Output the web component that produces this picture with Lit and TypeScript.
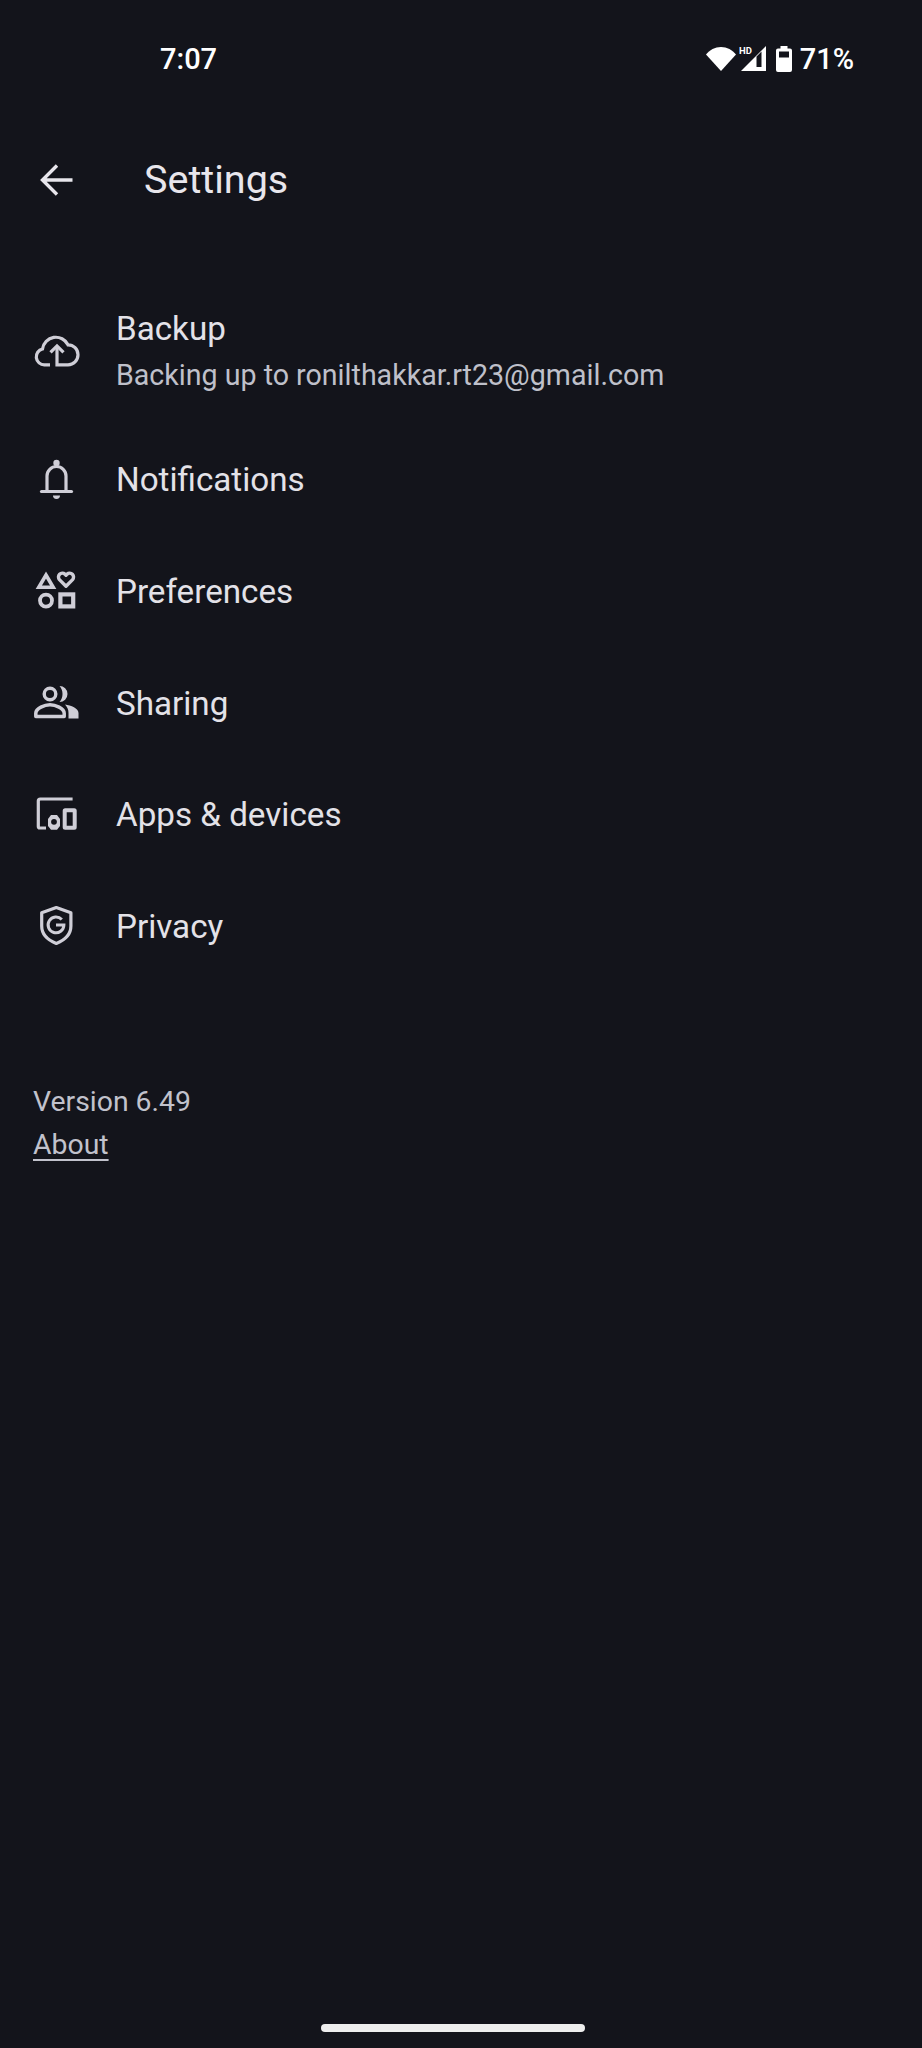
import { LitElement, html, css, svg } from "lit";
import { customElement } from "lit/decorators.js";

const BG = "#13141b";

const ICONS: Record<string, unknown> = {
  backup: svg`<g fill="none" stroke="currentColor" stroke-width="3.200"><path d="M18 36.800H12.500A8 8 0 0 1 10.500 21A13.500 13.500 0 0 1 36 16.800A10 10 0 0 1 36 36.800H25V18.600"/><path d="M18.500 24.400 25 17.900 31.500 24.400"/></g>`,
  bell: svg`<path d="M9.500 36.500H39.500" fill="none" stroke="currentColor" stroke-width="3.200" stroke-linecap="round"/><path d="M15 36V21a9.500 9.500 0 0 1 19 0V36" fill="none" stroke="currentColor" stroke-width="3.200"/><circle cx="24.500" cy="8" r="3.200" fill="currentColor"/><path d="M21 40.500h7a3.500 3.500 0 0 1-7 0z" fill="currentColor"/>`,
  prefs: svg`<path d="M14 8 21.200 20.300H6.800z" fill="none" stroke="currentColor" stroke-width="3.600" stroke-linejoin="miter"/><path d="M34 19.200 27.400 12.600a3.900 3.900 0 0 1 5.500-5.500L34 8.200l1.100-1.100a3.900 3.900 0 0 1 5.500 5.500z" fill="none" stroke="currentColor" stroke-width="3.400" stroke-linejoin="round"/><circle cx="14" cy="33.600" r="6" fill="none" stroke="currentColor" stroke-width="3.800"/><rect x="28.400" y="27.400" width="12.800" height="12" fill="none" stroke="currentColor" stroke-width="4.200"/>`,
  people: svg`<circle cx="18" cy="16" r="5.800" fill="none" stroke="currentColor" stroke-width="3.400"/><path d="M3.800 38.600V35.200c0-5 9-8.500 14.200-8.500s14.200 3.500 14.200 8.500v3.400z" fill="none" stroke="currentColor" stroke-width="3.500" stroke-linejoin="round"/><path d="M27.500 8a8 8 0 0 1 0 16c2-2.200 3-5 3-8s-1-5.800-3-8z" fill="currentColor"/><path d="M33 26.500c6 1 13.500 3.500 13.500 8.500v5.400H36.500V35c0-3.500-1.200-6-3.500-8.500z" fill="currentColor"/>`,
  devices: svg`<path d="M40.600 9H8.300a2 2 0 0 0-2 2V36.500a1.500 1.500 0 0 0 1.500 1.500H14" fill="none" stroke="currentColor" stroke-width="3.200"/><path d="M19 25h6l3 4v7l-3 3.700h-6l-3-3.700v-7z" fill="currentColor"/><circle cx="22" cy="31.800" r="2.900" fill="${BG}"/><rect x="32.700" y="20.300" width="10" height="17.500" rx=".5" fill="none" stroke="currentColor" stroke-width="4"/>`,
  shield: svg`<path d="M24.300 5.500 38.900 10.800V24c0 8-6 14-14.600 17.400C15.700 38 9.700 32 9.700 24V10.800z" fill="none" stroke="currentColor" stroke-width="3.200" stroke-linejoin="round"/><path d="M29.800 17.500A7.900 7.900 0 1 0 31.900 23H24" fill="none" stroke="currentColor" stroke-width="3"/>`,
};

const ROWS = [
  { icon: "bell", label: "Notifications" },
  { icon: "prefs", label: "Preferences" },
  { icon: "people", label: "Sharing" },
  { icon: "devices", label: "Apps & devices" },
  { icon: "shield", label: "Privacy" },
];

@customElement("app-root")
export class AppRoot extends LitElement {
  static styles = css`
    :host {
      display: block;
      width: 922px;
      height: 2048px;
      background: #13141b;
      font-family: Roboto, "Noto Sans", sans-serif;
      color: #e6e3e9;
      overflow: hidden;
      position: relative;
    }
    .status {
      height: 58px;
      padding: 30px 68px 0 160px;
      display: flex;
      align-items: center;
      justify-content: space-between;
      color: #fff;
      font-weight: 500;
      font-size: 29px;
    }
    .sysicons { display: flex; align-items: center; }
    .wifi { display: block; }
    .signal { display: block; margin-left: 3px; }
    .battery { display: block; margin-left: 9px; }
    .pct { margin-left: 8px; }
    .appbar {
      display: flex;
      align-items: center;
      height: 60px;
      margin-top: 62px;
      padding-left: 38px;
      gap: 70px;
    }
    .appbar svg { display: block; }
    .title { font-size: 39.5px; font-weight: 400; color: #e8e6ec; line-height: 60px; }
    .list { margin-top: 71px; }
    .row {
      display: flex;
      align-items: center;
      height: 111.700px;
      padding-left: 32px;
    }
    .row.two { height: 142px; }
    .icon { width: 48px; height: 48px; color: #cfced7; flex: none; display: block; }
    .label { font-size: 33.200px; color: #e3e2e8; line-height: 46px; }
    .sub { font-size: 28.600px; color: #bfc0ca; line-height: 46px; }
    .textcol { display: flex; flex-direction: column; margin-left: 36px; }
    .textcol.one { padding-top: 3px; }
    .foot { padding-left: 33px; margin-top: 99px; font-size: 28.400px; color: #c1c2cc; line-height: 43px; }
    .about {
      display: block;
      text-decoration: underline;
      text-decoration-thickness: 2px;
      text-underline-offset: 5px;
    }
    .nav {
      position: absolute;
      left: 321px;
      top: 2024px;
      width: 264px;
      height: 8px;
      border-radius: 4px;
      background: #eeeeee;
    }
  `;

  render() {
    return html`
      <div class="status">
        <span>7:07</span>
        <span class="sysicons">
          <svg class="wifi" width="30" height="24" viewBox="0 0 30 24"><path d="M0 7.500C3.500 3 9 0 15 0s11.500 3 15 7.500L15 24z" fill="#fff"/></svg>
          <svg class="signal" width="28" height="26" viewBox="0 0 28 26"><path d="M2 25 27 0v25z M17.500 10.500V21H22.500V5.500z" fill="#fff" fill-rule="evenodd"/><text x="0" y="7.500" font-size="9.500" font-weight="700" fill="#fff" font-family="Roboto">HD</text></svg>
          <svg class="battery" width="16" height="26" viewBox="0 0 16 26"><path d="M4.500 0h7v2.500h2.500a2 2 0 0 1 2 2V24a2 2 0 0 1-2 2H2a2 2 0 0 1-2-2V4.500a2 2 0 0 1 2-2h2.500z" fill="#fff"/><rect x="3" y="5.500" width="10" height="6" fill="${BG}"/></svg>
          <span class="pct">71%</span>
        </span>
      </div>
      <div class="appbar">
        <svg width="36" height="36" viewBox="0 0 36 36"><path d="M34.500 18H5M19 3.500 4.500 18 19 32.500" fill="none" stroke="#e8e6ec" stroke-width="3.400"/></svg>
        <span class="title">Settings</span>
      </div>
      <div class="list">
        <div class="row two">
          <svg class="icon" viewBox="0 0 48 48">${ICONS.backup}</svg>
          <div class="textcol">
            <span class="label">Backup</span>
            <span class="sub">Backing up to ronilthakkar.rt23@gmail.com</span>
          </div>
        </div>
        ${ROWS.map(
          (r) => html`<div class="row">
            <svg class="icon" viewBox="0 0 48 48">${ICONS[r.icon]}</svg>
            <div class="textcol one"><span class="label">${r.label}</span></div>
          </div>`
        )}
      </div>
      <div class="foot">
        <div>Version 6.49</div>
        <a class="about">About</a>
      </div>
      <div class="nav"></div>
    `;
  }
}
